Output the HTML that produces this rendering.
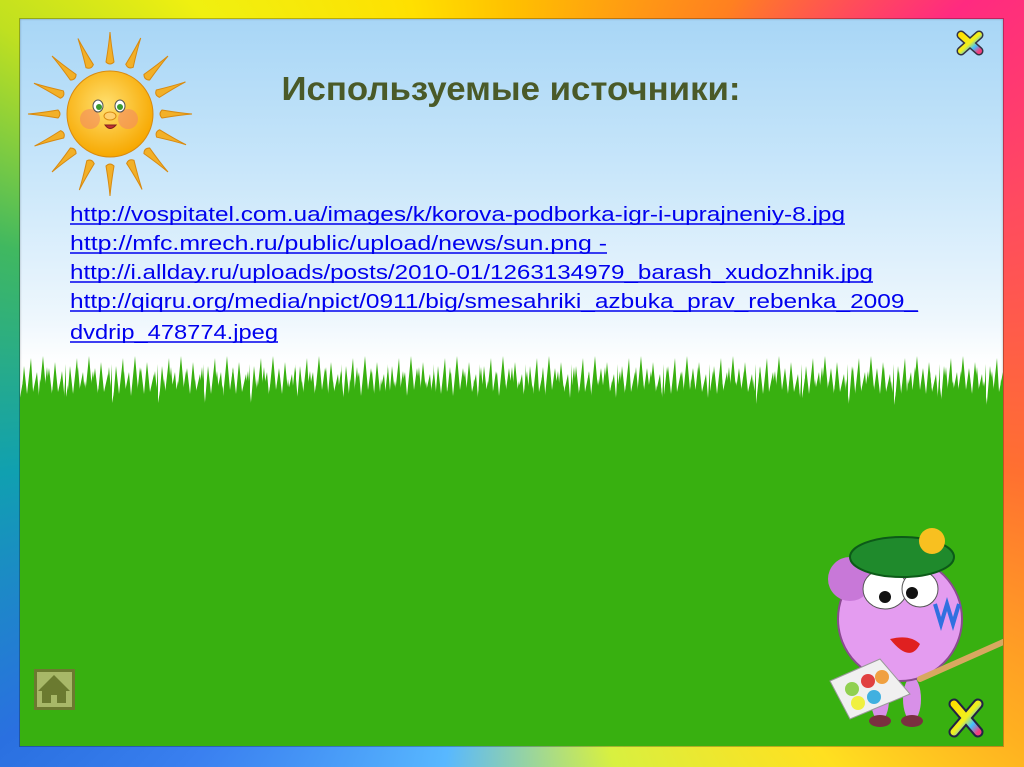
<!DOCTYPE html>
<html><head><meta charset="utf-8"><style>
html,body{margin:0;padding:0}
body{width:1024px;height:767px;position:relative;overflow:hidden;
background:conic-gradient(from 0deg at 50% 50%,#ffc000 0deg,#ff8020 30deg,#ff2a80 50deg,#ff4a60 70deg,#ff7030 100deg,#ffb020 125deg,#ffe020 140deg,#d8f040 165deg,#58b8ff 190deg,#3a80f0 220deg,#2a70e0 235deg,#10a0b0 260deg,#40b860 285deg,#c0e020 305deg,#f0f010 320deg,#ffe000 345deg,#ffc000 360deg);}
#panel{position:absolute;left:20px;top:19px;width:983px;height:727px;
background:linear-gradient(#a8d6f6 0px,#c8e6fa 150px,#eef7fd 300px,#ffffff 345px);
box-shadow:0 0 0 1px rgba(0,0,0,.25),inset 0 0 2px rgba(0,0,0,.3);overflow:hidden}
</style></head><body>
<div id="panel">
<svg width="983" height="727" style="position:absolute;left:0;top:0">
<defs>
<pattern id="g" x="0" y="335" width="46" height="60" patternUnits="userSpaceOnUse">
<path d="M0 60 L4 12 L7 40 L11 4 L13 38 L17 18 L19 42 L23 2 L26 36 L29 14 L32 40 L35 8 L38 38 L42 20 L44 44 L46 10 L46 60Z" fill="#38b010"/>
</pattern>
<pattern id="g2" x="17" y="340" width="31" height="60" patternUnits="userSpaceOnUse">
<path d="M0 60 L3 20 L6 45 L10 8 L13 44 L17 22 L20 46 L25 12 L28 44 L31 26 L31 60Z" fill="#38b010"/>
</pattern>
<radialGradient id="sun" cx="45%" cy="40%" r="60%"><stop offset="0" stop-color="#ffe070"/><stop offset="1" stop-color="#f7a800"/></radialGradient>
<linearGradient id="rb" x1="0" y1="0" x2="1" y2="1"><stop offset="0" stop-color="#ffe000"/><stop offset=".5" stop-color="#f0f020"/><stop offset=".75" stop-color="#40c0ff"/><stop offset="1" stop-color="#f04080"/></linearGradient>
</defs>
<rect x="0" y="335" width="983" height="60" fill="url(#g)"/>
<rect x="0" y="340" width="983" height="60" fill="url(#g2)"/>
<rect x="0" y="390" width="983" height="337" fill="#38b010"/>
<!-- sun -->
<g transform="translate(90,95)" fill="#f2b028" stroke="#d88a10" stroke-width="1">
<g id="ray"><path d="M-4 -52 Q-1 -70 0 -82 Q1 -70 4 -52 Q0 -48 -4 -52Z"/></g>
<use href="#ray" transform="rotate(22)"/><use href="#ray" transform="rotate(45)"/><use href="#ray" transform="rotate(67)"/>
<use href="#ray" transform="rotate(90)"/><use href="#ray" transform="rotate(112)"/><use href="#ray" transform="rotate(135)"/>
<use href="#ray" transform="rotate(157)"/><use href="#ray" transform="rotate(180)"/><use href="#ray" transform="rotate(202)"/>
<use href="#ray" transform="rotate(225)"/><use href="#ray" transform="rotate(247)"/><use href="#ray" transform="rotate(270)"/>
<use href="#ray" transform="rotate(292)"/><use href="#ray" transform="rotate(315)"/><use href="#ray" transform="rotate(337)"/>
<circle r="43" fill="url(#sun)"/>
<circle cx="-20" cy="5" r="10" fill="#f48a60" stroke="none" opacity=".6"/>
<circle cx="18" cy="5" r="10" fill="#f48a60" stroke="none" opacity=".6"/>
<ellipse cx="-12" cy="-8" rx="5" ry="6" fill="#fff" stroke="#555"/><circle cx="-11" cy="-7" r="3" fill="#3a9a30" stroke="none"/>
<ellipse cx="10" cy="-8" rx="5" ry="6" fill="#fff" stroke="#555"/><circle cx="10" cy="-7" r="3" fill="#3a9a30" stroke="none"/>
<ellipse cx="0" cy="2" rx="6" ry="4" fill="#ffd070"/>
<path d="M-5 11 Q0 18 6 11Z" fill="#c03030" stroke="#802020"/>
</g>
<!-- top right X -->
<g transform="translate(950,24)" stroke="#334" stroke-width="9" stroke-linecap="round"><path d="M-9 -8 L9 8 M9 -8 L-9 8"/></g>
<g transform="translate(950,24)" stroke="url(#rb)" stroke-width="6" stroke-linecap="round"><path d="M-9 -8 L9 8 M9 -8 L-9 8"/></g>
<!-- bottom right X -->
<g transform="translate(946,699)" stroke="#224" stroke-width="11" stroke-linecap="round"><path d="M-12 -14 L12 14 M12 -14 L-12 14"/></g>
<g transform="translate(946,699)" stroke="url(#rb)" stroke-width="7" stroke-linecap="round"><path d="M-12 -14 L12 14 M12 -14 L-12 14"/></g>
<!-- home -->
<rect x="14" y="650" width="41" height="41" fill="#6b7a30"/>
<rect x="17" y="653" width="35" height="35" fill="#a8b868"/>
<path d="M18 672 L34 656 L50 672Z M22 672 L46 672 L46 684 L22 684Z" fill="#6b7a30"/>
<rect x="31" y="676" width="6" height="8" fill="#a8b868"/>
<!-- character -->
<g transform="translate(880,600)">
<ellipse cx="-20" cy="80" rx="9" ry="22" fill="#d890e8"/><ellipse cx="12" cy="80" rx="9" ry="22" fill="#d890e8"/>
<ellipse cx="-20" cy="102" rx="11" ry="6" fill="#7a3040"/><ellipse cx="12" cy="102" rx="11" ry="6" fill="#7a3040"/>
<circle cx="0" cy="0" r="62" fill="#e49cf0" stroke="#8a4a90" stroke-width="2"/>
<circle cx="-50" cy="-40" r="22" fill="#c878d8"/>
<ellipse cx="-15" cy="-30" rx="22" ry="20" fill="#fff" stroke="#555"/>
<ellipse cx="20" cy="-30" rx="18" ry="18" fill="#fff" stroke="#555"/>
<circle cx="-15" cy="-22" r="6" fill="#111"/><circle cx="12" cy="-26" r="6" fill="#111"/>
<path d="M-10 20 Q10 45 20 25 Q10 15 -10 20Z" fill="#e02020"/>
<path d="M35 -15 l6 20 l6 -20 l6 20 l6 -20" stroke="#3070e0" stroke-width="4" fill="none"/>
<ellipse cx="2" cy="-62" rx="52" ry="20" fill="#1f8a2c" stroke="#0c5a18" stroke-width="2"/>
<circle cx="32" cy="-78" r="13" fill="#f8c020"/>
<path d="M20 60 L110 20" stroke="#d8a860" stroke-width="6" stroke-linecap="round"/>
<path d="M-70 62 L-20 40 L10 75 L-50 100Z" fill="#f0f0f0" stroke="#999"/>
<circle cx="-48" cy="70" r="7" fill="#90d050"/><circle cx="-32" cy="62" r="7" fill="#e04040"/><circle cx="-18" cy="58" r="7" fill="#f0a040"/>
<circle cx="-42" cy="84" r="7" fill="#f0f040"/><circle cx="-26" cy="78" r="7" fill="#40b0e0"/>
</g>
<!-- title -->
<text x="491" y="81" text-anchor="middle" font-family="Liberation Sans, sans-serif" font-weight="bold" font-size="33" fill="#4a5a28" textLength="459" lengthAdjust="spacingAndGlyphs">Используемые источники:</text>
<g font-family="Liberation Sans, sans-serif" font-size="20" fill="#0000ee">
<text x="50" y="202" textLength="775" lengthAdjust="spacingAndGlyphs">http://vospitatel.com.ua/images/k/korova-podborka-igr-i-uprajneniy-8.jpg</text>
<text x="50" y="231" textLength="537" lengthAdjust="spacingAndGlyphs">http://mfc.mrech.ru/public/upload/news/sun.png -</text>
<text x="50" y="260" textLength="803" lengthAdjust="spacingAndGlyphs">http://i.allday.ru/uploads/posts/2010-01/1263134979_barash_xudozhnik.jpg</text>
<text x="50" y="289" textLength="848" lengthAdjust="spacingAndGlyphs">http://qiqru.org/media/npict/0911/big/smesahriki_azbuka_prav_rebenka_2009_</text>
<text x="50" y="320" textLength="208" lengthAdjust="spacingAndGlyphs">dvdrip_478774.jpeg</text>
</g>
<g stroke="#0000ee" stroke-width="1.5">
<line x1="50" y1="205" x2="825" y2="205"/><line x1="50" y1="234" x2="587" y2="234"/>
<line x1="50" y1="263" x2="853" y2="263"/><line x1="50" y1="292" x2="898" y2="292"/>
<line x1="50" y1="323" x2="258" y2="323"/>
</g>
</svg>
</div>
</body></html>
